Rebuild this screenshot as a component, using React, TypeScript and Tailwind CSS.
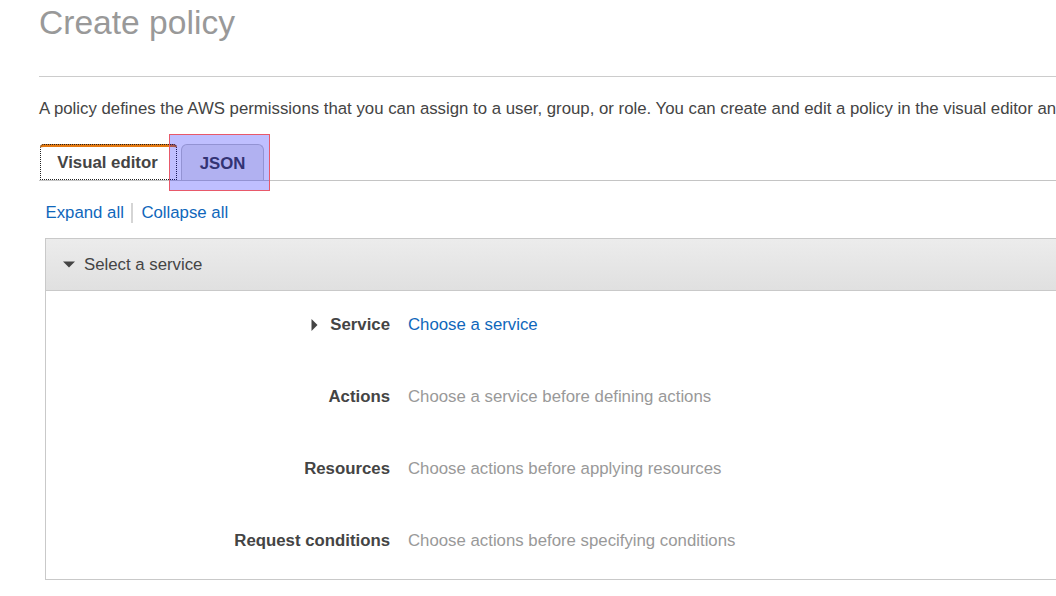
import React from 'react';

const rows = [
  { label: 'Actions', text: 'Choose a service before defining actions' },
  { label: 'Resources', text: 'Choose actions before applying resources' },
  { label: 'Request conditions', text: 'Choose actions before specifying conditions' },
];

export default function App() {
  return (
    <div className="relative h-[596px] w-[1056px] overflow-hidden bg-white pl-[39px] font-['Liberation_Sans',Arial,sans-serif] text-[16.8px] text-[#444444]">
      <h1 className="h-[77px] whitespace-nowrap border-b border-[#cccccc] text-[33.6px] leading-[46px] text-[#999999]">
        Create policy
      </h1>
      <p className="mt-[21px] w-[1200px] whitespace-nowrap leading-[22px]">
        A policy defines the AWS permissions that you can assign to a user, group, or role. You can create and edit a policy in the visual editor and using JSON.
      </p>

      {/* tabs */}
      <div className="mt-[24px] flex h-[37px] items-end border-b border-[#c4c4c4]">
        <div className="ml-px h-[36px] w-[137px] rounded-t-[4px] border-t-[3px] border-t-[#e47911] bg-white pr-[2px] outline-dotted outline-1 -outline-offset-1 outline-[#222222]">
          <div className="text-center font-bold leading-[32px]">Visual editor</div>
        </div>
        <div className="ml-[4px] h-[36px] w-[83px] rounded-t-[6px] border border-b-0 border-[#c4c4c4] bg-[#ececec] text-center font-bold leading-[37px]">
          JSON
        </div>
      </div>

      <div className="mt-[21px] flex items-center pl-[6.5px] leading-[22px] text-[#0f67bb]">
        <a>Expand all</a>
        <span className="ml-[7.5px] mr-[8px] h-[20px] w-[2px] bg-[#d5d5d5]" />
        <a>Collapse all</a>
      </div>

      <div className="ml-[6px] mt-[14px] h-[342px] w-[1100px] border border-[#c9c9c9]">
        <div className="flex h-[52px] items-center border-b border-[#c9c9c9] bg-gradient-to-b from-[#ececec] to-[#e0e0e0] pl-[17px]">
          <svg width="12" height="7" viewBox="0 0 12 7" className="mr-[9px]">
            <path d="M0 0.5h12L6 6.5z" fill="#444444" />
          </svg>
          Select a service
        </div>

        <div className="flex h-[72px] items-start pt-[23px] leading-[22px]">
          <div className="flex w-[344px] items-center justify-end font-bold">
            <svg width="7" height="12" viewBox="0 0 7 12" className="mr-[12px]">
              <path d="M0.5 0l6 6-6 6z" fill="#444444" />
            </svg>
            Service
          </div>
          <a className="ml-[18px] text-[#0f67bb]">Choose a service</a>
        </div>

        {rows.map((row) => (
          <div key={row.label} className="flex h-[72px] items-start pt-[23px] leading-[22px]">
            <div className="w-[344px] text-right font-bold">{row.label}</div>
            <div className="ml-[18px] text-[#999999]">{row.text}</div>
          </div>
        ))}
      </div>

      {/* highlight laid over the JSON tab */}
      <div className="absolute left-[169px] top-[134px] h-[57px] w-[101px] border border-[#e8596a] bg-[#0000ff]/25" />
    </div>
  );
}
